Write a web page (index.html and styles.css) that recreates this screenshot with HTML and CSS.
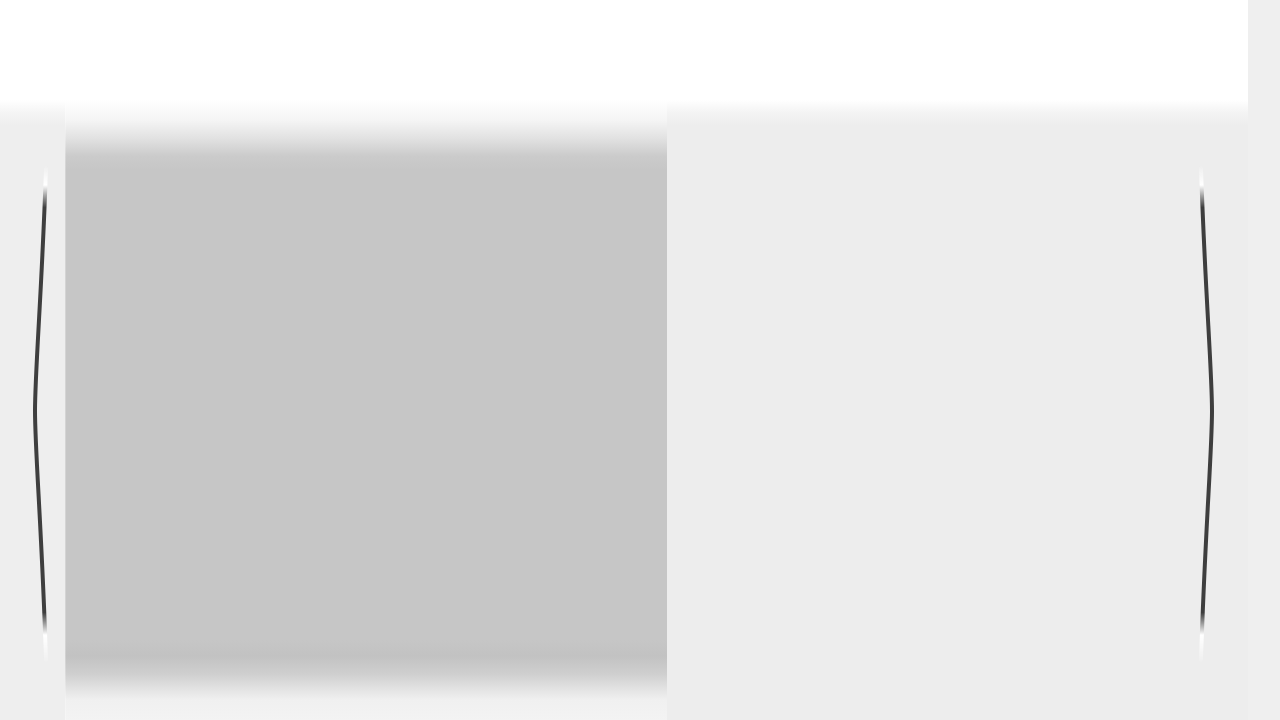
FILE: index.html
```html
<!DOCTYPE html>
<html>
<head>
<meta charset="utf-8">
<link rel="stylesheet" href="styles.css">
</head>
<body>
<div class="screen">
  <div class="bar">
    <div class="top"></div>
    <div class="track">
      <div class="btn btn-left">
        <svg width="65" height="620" viewBox="0 100 65 620">
          <defs>
            <linearGradient id="lg" gradientUnits="userSpaceOnUse" x1="0" y1="165" x2="0" y2="665">
              <stop offset="0" stop-color="#ffffff" stop-opacity="0"/>
              <stop offset="0.04" stop-color="#ffffff"/>
              <stop offset="0.085" stop-color="#3e3e3e"/>
              <stop offset="0.895" stop-color="#3e3e3e"/>
              <stop offset="0.94" stop-color="#ffffff"/>
              <stop offset="1" stop-color="#ffffff" stop-opacity="0"/>
            </linearGradient>
          </defs>
          <path class="chev" d="M46 168 C42 290 35 370 35 411 C35 452 42 532 46 660" stroke="url(#lg)"/>
        </svg>
      </div>
      <div class="thumb"></div>
      <div class="rest">
        <svg width="581" height="620" viewBox="667 100 581 620">
          <defs>
            <linearGradient id="rg" gradientUnits="userSpaceOnUse" x1="0" y1="165" x2="0" y2="665">
              <stop offset="0" stop-color="#ffffff" stop-opacity="0"/>
              <stop offset="0.04" stop-color="#ffffff"/>
              <stop offset="0.085" stop-color="#3e3e3e"/>
              <stop offset="0.895" stop-color="#3e3e3e"/>
              <stop offset="0.94" stop-color="#ffffff"/>
              <stop offset="1" stop-color="#ffffff" stop-opacity="0"/>
            </linearGradient>
          </defs>
          <path class="chev" d="M1201 168 C1205 290 1212 370 1212 411 C1212 452 1205 532 1201 660" stroke="url(#rg)"/>
        </svg>
      </div>
    </div>
  </div>
  <div class="side"></div>
</div>
</body>
</html>
```
FILE: styles.css
```css
html, body {
  margin: 0;
  padding: 0;
  background: #efefef;
}
.screen {
  display: flex;
  width: 1280px;
  height: 720px;
  overflow: hidden;
}
.bar {
  width: 1248px;
  display: flex;
  flex-direction: column;
}
.top {
  height: 100px;
  background: #ffffff;
  flex: none;
}
.track {
  flex: 1;
  display: flex;
}
.btn-left {
  width: 65px;
  flex: none;
  background: linear-gradient(to bottom, #ffffff 0px, #f5f5f5 12px, #eeeeee 26px, #eeeeee 100%);
}
.btn svg, .rest svg {
  display: block;
}
.thumb {
  width: 602px;
  flex: none;
  background: linear-gradient(to bottom,
    #ffffff 0px,
    #f5f5f5 20px,
    #e2e2e2 38px,
    #cbcbcb 56px,
    #c6c6c6 70px,
    #c6c6c6 540px,
    #c2c2c2 556px,
    #cfcfcf 574px,
    #e4e4e4 590px,
    #f0f0f0 600px,
    #f3f3f3 100%);
  box-shadow: inset 1px 0 0 rgba(255,255,255,0.25);
}
.rest {
  flex: 1;
  background: linear-gradient(to bottom, #ffffff 0px, #f4f4f4 12px, #ededed 26px, #ededed 100%);
}
.chev {
  fill: none;
  stroke-width: 4;
  stroke-linecap: round;
  filter: blur(0.7px);
}
.side {
  width: 32px;
  flex: none;
  background: #efefef;
}
```
